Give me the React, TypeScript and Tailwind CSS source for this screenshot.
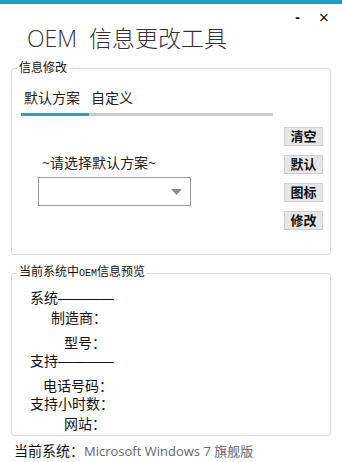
const CJK = "font-['Open_Sans','Noto_Sans_CJK_SC',sans-serif]";
const DASH = "font-['Liberation_Sans',sans-serif]";

function GroupBox({ title, className, children }: { title: React.ReactNode; className?: string; children: React.ReactNode }) {
  return (
    <fieldset className={`mx-[11px] border border-[#dadada] rounded-[3px] ${className ?? ""}`}>
      <legend className="ml-[5px] px-[2px] text-[12px] leading-[16px] text-[#111]">{title}</legend>
      {children}
    </fieldset>
  );
}

function SideButton({ label }: { label: string }) {
  return (
    <button className="w-[39px] h-[19px] bg-[#e6e6e6] border border-[#cfcfcf] text-[13px] leading-[17px] font-bold text-[#111]">
      {label}
    </button>
  );
}

const previewRows = [
  { text: "系统", dash: true, pl: "pl-[18px]", mt: "mt-[0px]" },
  { text: "制造商：", pl: "pl-[39px]", mt: "mt-[4px]" },
  { text: "型号：", pl: "pl-[52px]", mt: "mt-[9px]" },
  { text: "支持", dash: true, pl: "pl-[18px]", mt: "mt-[2px]" },
  { text: "电话号码：", pl: "pl-[31px]", mt: "mt-[9px]" },
  { text: "支持小时数：", pl: "pl-[18px]", mt: "mt-[2px]" },
  { text: "网站：", pl: "pl-[52px]", mt: "mt-[4px]" },
];

export default function App() {
  return (
    <div className={`w-[342px] h-[462px] bg-white overflow-hidden ${CJK} text-[#111]`}>
      <div className="h-[4px] bg-[#1a9fc9]" />
      <div className="relative h-[56px]">
        <div className="absolute right-[13px] top-[2px] flex items-center gap-[19px] text-[#111]">
          <span className="text-[14px] font-bold">-</span>
          <span className="text-[18px] leading-[20px]">×</span>
        </div>
        <div className="pl-[27px] pt-[20px] text-[23px] leading-[28px] font-light text-[#333]">
          OEM&nbsp;&nbsp;信息更改工具
        </div>
      </div>

      <GroupBox title="信息修改" className="h-[195px]">
        <div className="flex pl-[9px] pr-[7px]">
          <div className="w-[252px]">
            <div className="flex gap-[11px] pl-[3px] pt-[12px] text-[14px] leading-[20px] text-[#222]">
              <span>默认方案</span>
              <span>自定义</span>
            </div>
            <div className="mt-[5px] flex h-[3px]">
              <div className="w-[68px] bg-[#3a9bb3]" />
              <div className="flex-1 bg-[#cbcbcb]" />
            </div>
            <div className="pl-[21px] pt-[38px] text-[14px] leading-[18px] text-[#222]">~请选择默认方案~</div>
            <div className="ml-[17px] mt-[5px] w-[153px] h-[29px] border border-[#9c9c9c] flex items-center justify-end pr-[8px]">
              <svg width="11" height="6" viewBox="0 0 11 6">
                <path d="M0 0H11L5.5 6Z" fill="#8c8c8c" />
              </svg>
            </div>
          </div>
          <div className="ml-auto flex flex-col gap-[9px] pt-[51px]">
            <SideButton label="清空" />
            <SideButton label="默认" />
            <SideButton label="图标" />
            <SideButton label="修改" />
          </div>
        </div>
      </GroupBox>

      <GroupBox
        title={
          <>
            当前系统中<span className="font-['Liberation_Mono',monospace] text-[10px]">OEM</span>信息预览
          </>
        }
        className="mt-[9px] h-[172px]"
      >
        <div className="pt-[8px] flex flex-col text-[14px] leading-[16px] text-[#111]">
          {previewRows.map((r) => (
            <div key={r.text} className={`${r.pl} ${r.mt}`}>
              {r.text}
              {r.dash && <span className={DASH}>————</span>}
            </div>
          ))}
        </div>
      </GroupBox>

      <div className="pl-[14px] pt-[5px] text-[14px] leading-[20px]">
        <span className="text-[#111]">当前系统：</span>
        <span className="text-[#666] text-[13px]">Microsoft Windows 7 旗舰版</span>
      </div>
    </div>
  );
}
